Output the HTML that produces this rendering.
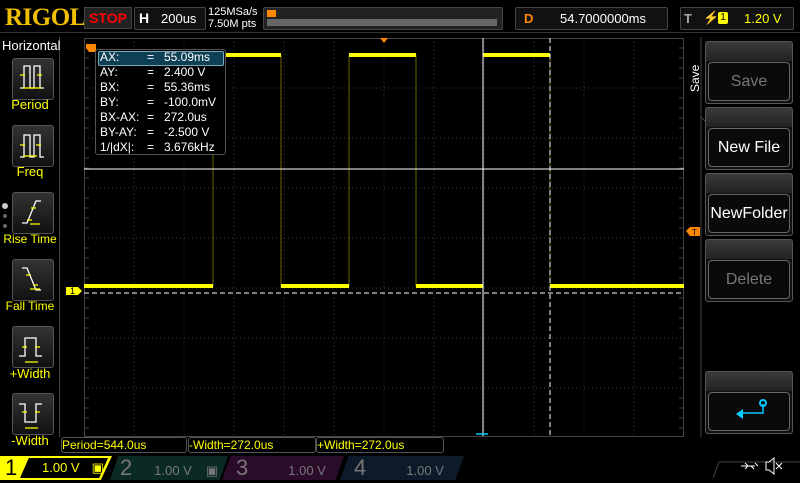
<!DOCTYPE html>
<html><head><style>
body{margin:0;width:800px;height:480px;background:#000;overflow:hidden;position:relative;font-family:"Liberation Sans",sans-serif;color:#fff}
.a{position:absolute}
.btn{position:absolute;left:12px;width:40px;height:40px;border:1px solid #555;border-radius:3px;background:linear-gradient(#333,#111)}
.lbl{position:absolute;left:0;width:60px;text-align:center;color:#ff0;font-size:13px}
.rb{position:absolute;left:705px;width:86px;height:61px;border:1px solid #555;border-radius:3px;background:linear-gradient(#3a3a3a 0,#222 19px,#111 19px)}
.rb div{position:absolute;left:2px;top:20px;width:80px;height:37px;border:1px solid #666;border-radius:4px;background:#0a0a0a;text-align:center;line-height:37px;font-size:16px}
.ch{position:absolute;top:456px;height:24px;font-size:13px;line-height:24px}
</style></head><body>
<!-- top bar -->
<div class="a" style="left:5px;top:4px;font-family:'Liberation Serif',serif;font-weight:bold;font-size:25px;color:#f0c000;letter-spacing:-0.5px">RIGOL</div>
<div class="a" style="left:84px;top:7px;width:46px;height:20px;background:#222;border:1px solid #444;color:#f00;font-weight:bold;font-size:14px;text-align:center;line-height:20px">STOP</div>
<div class="a" style="left:134px;top:7px;width:70px;height:21px;border:1px solid #444;border-radius:2px;background:#111"><span style="position:absolute;left:4px;top:2px;font-weight:bold;font-size:14px">H</span><span style="position:absolute;left:26px;top:3px;font-size:13px">200us</span></div>
<div class="a" style="left:208px;top:6px;font-size:11px;line-height:12px">125MSa/s<br>7.50M pts</div>
<div class="a" style="left:263px;top:7px;width:238px;height:21px;border:1px solid #444;border-radius:2px;background:#222">
<div class="a" style="left:3px;top:11px;width:230px;height:7px;background:#666"></div>
<div class="a" style="left:3px;top:2px;width:9px;height:7px;background:#f80"></div></div>
<div class="a" style="left:515px;top:7px;width:151px;height:21px;border:1px solid #444;border-radius:2px;background:#111"><span style="position:absolute;left:8px;top:3px;color:#f80;font-weight:bold;font-size:13px">D</span><span style="position:absolute;left:44px;top:3px;font-size:13px">54.7000000ms</span></div>
<div class="a" style="left:680px;top:7px;width:112px;height:21px;border:1px solid #444;border-radius:2px;background:#111"><span style="position:absolute;left:3px;top:3px;color:#aaa;font-weight:bold;font-size:13px">T</span><span style="position:absolute;left:22px;top:2px;color:#ff0;font-size:13px">⚡</span><span style="position:absolute;left:37px;top:4px;width:10px;height:12px;background:#ff0;color:#000;font-size:10px;text-align:center;border-radius:2px">1</span><span style="position:absolute;left:63px;top:3px;color:#ff0;font-size:13px">1.20 V</span></div>
<div class="a" style="left:0;top:32px;width:800px;height:1px;background:#333"></div>
<!-- left panel -->
<div class="a" style="left:59px;top:37px;width:1px;height:400px;background:#444"></div>
<div class="a" style="left:2px;top:38px;font-size:13px">Horizontal</div>
<div class="btn" style="top:58px"></div><div class="lbl" style="top:97px">Period</div>
<div class="btn" style="top:125px"></div><div class="lbl" style="top:164px">Freq</div>
<div class="btn" style="top:192px"></div><div class="lbl" style="top:232px;font-size:12px">Rise Time</div>
<div class="btn" style="top:259px"></div><div class="lbl" style="top:299px;font-size:12px">Fall Time</div>
<div class="btn" style="top:326px"></div><div class="lbl" style="top:366px">+Width</div>
<div class="btn" style="top:393px"></div><div class="lbl" style="top:433px">-Width</div>
<div class="a" style="left:2px;top:203px;width:6px;height:6px;border-radius:3px;background:#ccc"></div>
<div class="a" style="left:3px;top:214px;width:4px;height:4px;border-radius:2px;background:#666"></div>
<div class="a" style="left:3px;top:224px;width:4px;height:4px;border-radius:2px;background:#666"></div>
<svg class="a" style="left:0;top:0" width="800" height="480">
<g fill="none" stroke="#fff" stroke-width="1.3">
<path d="M20 88h4V66h6v22h4V66h6v22h4"/>
<path d="M20 157h4v-22h6v22h4v-22h6v22h4"/>
<path d="M22 223h5l9-22h5"/>
<path d="M22 268h5l9 22h5"/>
<path d="M19 356h6v-18h11v18h6"/>
<path d="M19 404h6v18h11v-18h6"/>
</g>
<g stroke="#ff0" stroke-width="1.3" fill="none"><path d="M23 88h18M23 156h14M30 224h10M30 289h10M25 362h13M25 428h13"/>
<path d="M20 75h5M37 75h5M20 145h5M36 145h5M31 208h5M27 220h5M26 275h5M33 285h5M22 347h5M35 347h5M22 412h5M35 412h5"/></g>
<!-- grid -->
<g stroke="#3a3a3a" stroke-width="1" stroke-dasharray="1,3">
<path d="M134 38V436M184 38V436M234 38V436M284 38V436M334 38V436M434 38V436M484 38V436M534 38V436M584 38V436M634 38V436"/>
<path d="M84 88H684M84 138H684M84 188H684M84 288H684M84 338H684M84 388H684"/>
<path d="M84 238H684M384 38V436"/>
</g>
<rect x="84.5" y="38.5" width="599" height="398" fill="none" stroke="#444"/>
<g stroke="#444"><path d="M84 48h5M84 58h5M84 68h5M84 78h5M84 98h5M84 108h5M84 118h5M84 128h5M84 148h5M84 158h5M84 168h5M84 178h5M84 198h5M84 208h5M84 218h5M84 228h5M84 248h5M84 258h5M84 268h5M84 278h5M84 298h5M84 308h5M84 318h5M84 328h5M84 348h5M84 358h5M84 368h5M84 378h5M84 398h5M84 408h5M84 418h5M84 428h5"/>
<path d="M679 48h5M679 58h5M679 68h5M679 78h5M679 98h5M679 108h5M679 118h5M679 128h5M679 148h5M679 158h5M679 168h5M679 178h5M679 198h5M679 208h5M679 218h5M679 228h5M679 248h5M679 258h5M679 268h5M679 278h5M679 298h5M679 308h5M679 318h5M679 328h5M679 348h5M679 358h5M679 368h5M679 378h5M679 398h5M679 408h5M679 418h5M679 428h5"/></g>
<!-- trace -->
<g stroke="#6a6500" stroke-width="1"><path d="M213 55V287M281 55V287M349 55V287M416 55V287M483 55V287M550 55V287"/></g>
<g stroke="#ff0" stroke-width="4"><path d="M84 286H213M281 286H349M416 286H483M550 286H684"/><path d="M213 55H281M349 55H416M483 55H550"/></g>
<!-- cursors -->
<path d="M84 169H684" stroke="#fff"/>
<path d="M84 293H684" stroke="#fff" stroke-dasharray="5,3"/>
<path d="M483 38V436" stroke="#fff"/>
<path d="M550 38V436" stroke="#fff" stroke-dasharray="5,3"/>
<path d="M476 434h12" stroke="#0cf" stroke-width="1.5"/>
<!-- markers -->
<path d="M66 287h12l4 4-4 4H66z" fill="#ff0"/><text x="70" y="294" font-size="9" fill="#000" font-family="Liberation Sans">1</text>
<path d="M86 44h10v8H89l-3-4z" fill="#f80"/>
<path d="M380 38h8l-4 5z" fill="#f80"/>
<path d="M686 231l4-4h10v9h-10z" fill="#f80"/><text x="692" y="235" font-size="8" fill="#000" font-family="Liberation Sans">T</text>
<!-- right panel borders -->
<path d="M701 37V437M701 117l14 14" stroke="#444" fill="none"/>
<path d="M713 478l6-16h81" stroke="#444" fill="none"/>
<!-- usb / speaker -->
<path d="M741 466h14M745 463l3 3-3 3M758 466l-3-3M751 466l3 3" stroke="#fff" fill="none"/>
<path d="M766 462h3l5-4v16l-5-4h-3z M776 463l6 6M782 463l-6 6" stroke="#fff" fill="none"/>
</svg>
<!-- measurement box -->
<div class="a" style="left:95px;top:49px;width:129px;height:104px;border:1px solid #555;border-radius:3px;background:#000;font-size:12px;line-height:15px"></div>
<div class="a" style="left:98px;top:51px;width:124px;height:13px;background:#0d3f55;border:1px solid #7ab;border-radius:2px"></div>
<div class="a" style="left:100px;top:50px;font-size:12px;line-height:15px;white-space:pre">AX:
AY:
BX:
BY:
BX-AX:
BY-AY:
1/|dX|:</div>
<div class="a" style="left:147px;top:50px;font-size:12px;line-height:15px;white-space:pre">=
=
=
=
=
=
=</div>
<div class="a" style="left:164px;top:50px;font-size:12px;line-height:15px;white-space:pre">55.09ms
2.400 V
55.36ms
-100.0mV
272.0us
-2.500 V
3.676kHz</div>
<!-- right panel -->
<div class="a" style="font-size:12px;transform:rotate(-90deg);transform-origin:left top;top:92px;left:688px">Save</div>
<div class="rb" style="top:41px"><div style="color:#777">Save</div></div>
<div class="rb" style="top:107px"><div>New File</div></div>
<div class="rb" style="top:173px"><div>NewFolder</div></div>
<div class="rb" style="top:239px"><div style="color:#777">Delete</div></div>
<div class="rb" style="top:371px"><div></div></div>
<svg class="a" style="left:0;top:0" width="800" height="480">
<path d="M763 404v9h-20" stroke="#0cf" stroke-width="1.5" fill="none"/><circle cx="763" cy="403" r="3" fill="none" stroke="#0cf" stroke-width="2"/><path d="M736 414l7-5v10z" fill="#0cf"/>
</svg>
<!-- measure results -->
<div class="a" style="left:61px;top:437px;width:124px;height:14px;border:1px solid #555;border-radius:3px;color:#ff0;font-size:12px;line-height:14px">Period=544.0us</div>
<div class="a" style="left:188px;top:437px;width:126px;height:14px;border:1px solid #555;border-radius:3px;color:#ff0;font-size:12px;line-height:14px">-Width=272.0us</div>
<div class="a" style="left:316px;top:437px;width:126px;height:14px;border:1px solid #555;border-radius:3px;color:#ff0;font-size:12px;line-height:14px">+Width=272.0us</div>
<!-- channels -->
<div class="ch" style="left:0;width:112px;background:#ff0;clip-path:polygon(0 0,100% 0,90% 100%,0 100%)"></div>
<div class="ch" style="left:20px;width:88px;background:#000;clip-path:polygon(10% 0,100% 0,90% 100%,0 100%);color:#ff0;top:458px;height:20px;line-height:20px"><span style="margin-left:22px">1.00 V</span><span style="margin-left:12px">▣</span></div>
<div class="ch" style="left:5px;color:#000;font-size:22px">1</div>
<div class="ch" style="left:110px;width:118px;background:#0c2a25;clip-path:polygon(7% 0,100% 0,93% 100%,0 100%);color:#777"><span style="font-size:22px;margin-left:10px">2</span><span style="margin-left:22px">1.00 V</span><span style="margin-left:14px">▣</span></div>
<div class="ch" style="left:222px;width:122px;background:#2a0c2a;clip-path:polygon(7% 0,100% 0,93% 100%,0 100%);color:#777"><span style="font-size:22px;margin-left:14px">3</span><span style="margin-left:40px">1.00 V</span></div>
<div class="ch" style="left:340px;width:124px;background:#0c1a2a;clip-path:polygon(7% 0,100% 0,93% 100%,0 100%);color:#777"><span style="font-size:22px;margin-left:14px">4</span><span style="margin-left:40px">1.00 V</span></div>
</body></html>
